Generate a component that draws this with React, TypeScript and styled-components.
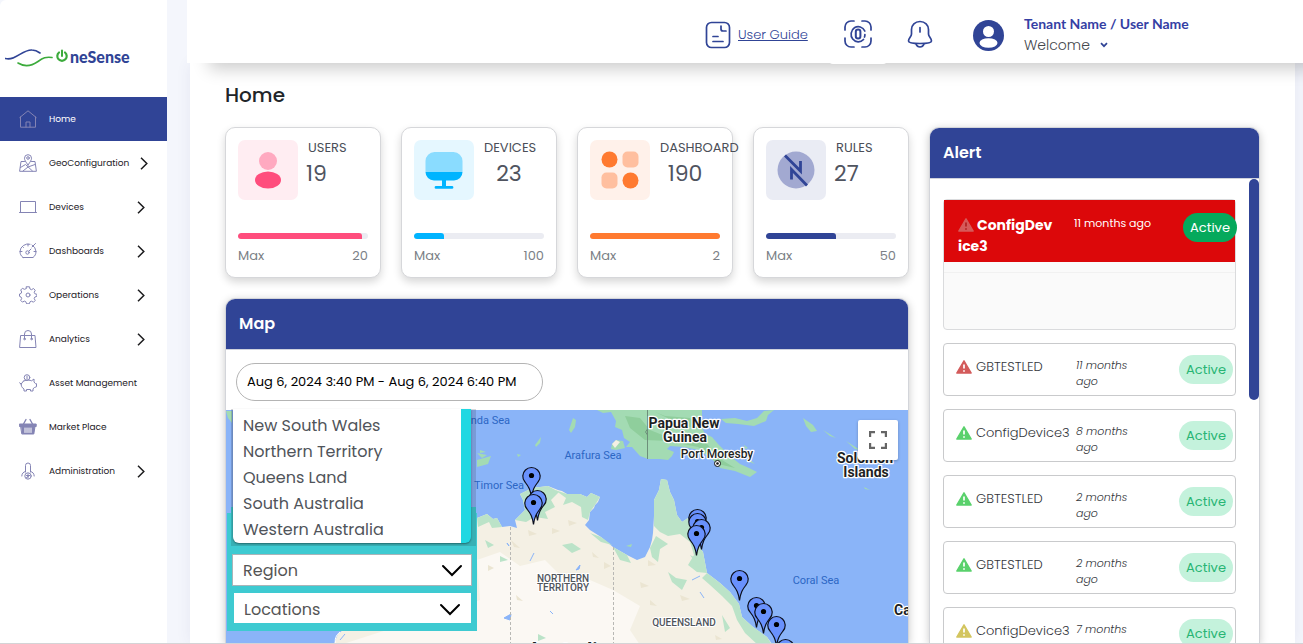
import React from "react";
import styled, { createGlobalStyle } from "styled-components";

const blue = "#304496";

const GlobalStyle = createGlobalStyle`
  *, *::before, *::after { box-sizing: border-box; }
  body {
    margin: 0;
    background: #f4f6fc;
    font-family: Poppins, Inter, "Liberation Sans", sans-serif;
    color: #4b4f58;
  }
  button, input { font-family: inherit; }
  button { border: 0; padding: 0; background: none; cursor: pointer; }
  h1, h2, p, ul { margin: 0; padding: 0; }
  ul { list-style: none; }
  svg { flex: none; }
`;

/* ---------- Shell ---------- */

const Shell = styled.div`
  display: flex;
  height: 100vh;
  overflow: hidden;
  border-bottom: 1px solid #d4d4d6;
  border-radius: 6px 0 0 0;
`;

const Sidebar = styled.aside`
  flex: 0 0 167px;
  min-width: 0;
  background: #fff;
`;

const LogoLink = styled.a`
  display: flex;
  align-items: center;
  gap: 1px;
  height: 97px;
  padding: 17px 0 0 5px;
  text-decoration: none;
`;

const LogoWord = styled.span`
  font: 900 16px/20px Lato, sans-serif;
  color: ${blue};
`;

const NavLink = styled.a<{ $active?: boolean }>`
  display: flex;
  align-items: center;
  height: 44px;
  padding: 0 18px 0 19px;
  font-size: 9px;
  line-height: 16px;
  text-decoration: none;
  color: ${(p) => (p.$active ? "#fff" : "#1d2026")};
  background: ${(p) => (p.$active ? blue : "transparent")};
`;

const NavText = styled.span`
  min-width: 88px;
  margin-left: 12px;
  padding-right: 11px;
  white-space: nowrap;
`;

const Column = styled.div`
  display: flex;
  flex: 1;
  flex-direction: column;
  min-width: 0;
  margin-left: 20px;
`;

const TopBar = styled.header`
  position: relative;
  z-index: 2;
  display: flex;
  flex: 0 0 63px;
  align-items: center;
  justify-content: flex-end;
  padding: 7px 117px 0 0;
  background: #fff;
  box-shadow: 22px 6px 16px rgba(0, 0, 0, 0.2);
`;

const GuideLink = styled.a`
  display: flex;
  align-items: center;
  gap: 7px;
  width: 104px;
  font-size: 13px;
  line-height: 20px;
  font-weight: 300;
  white-space: nowrap;
  color: ${blue};
`;

const ScanButton = styled.button`
  display: grid;
  place-items: center;
  align-self: stretch;
  width: 58px;
  margin: -4px 20px -1px;
  border-radius: 0 0 4px 4px;
  background: #fff;
`;

const IconButton = styled.button`
  display: grid;
  place-items: center;
  padding-bottom: 3px;
`;

const Profile = styled.div`
  display: flex;
  align-items: center;
  gap: 20px;
  margin-left: 40px;
`;

const Tenant = styled.p`
  width: 162px;
  font: 700 14px/20px Lato, sans-serif;
  white-space: nowrap;
  color: #3540a4;
`;

const Welcome = styled.button`
  display: flex;
  align-items: center;
  gap: 10px;
  font-size: 14px;
  font-weight: 300;
  line-height: 22px;
  color: #44474c;
`;

const Main = styled.main`
  display: flex;
  flex: 1;
  flex-direction: column;
  min-height: 0;
  margin: 0 8px 0 3px;
  padding: 17px 35px 0;
  background: #fff;
  box-shadow: 0 0 14px rgba(60, 70, 130, 0.08);
`;

const PageTitle = styled.h1`
  margin-bottom: 17px;
  font-size: 20px;
  font-weight: 500;
  line-height: 30px;
  color: #212529;
`;

const Board = styled.div`
  display: grid;
  flex: 1;
  grid-template-columns: minmax(0, 1fr) 331px;
  grid-template-rows: minmax(0, 1fr);
  gap: 20px;
  min-height: 0;
`;

const LeftSide = styled.div`
  display: flex;
  flex-direction: column;
  gap: 20px;
  min-width: 0;
`;

/* ---------- Stat cards ---------- */

const Stats = styled.section`
  display: grid;
  grid-template-columns: repeat(4, minmax(0, 1fr));
  gap: 20px;
`;

const StatCard = styled.article`
  height: 151px;
  padding: 12px;
  border: 1px solid #d6d7da;
  border-radius: 10px;
  background: #fff;
  box-shadow: 0 4px 8px rgba(0, 0, 0, 0.16);
`;

const StatTop = styled.div`
  display: flex;
  height: 93px;
`;

const Tile = styled.div<{ $tint: string }>`
  display: grid;
  flex: none;
  place-items: center;
  width: 60px;
  height: 60px;
  border-radius: 7px;
  background: ${(p) => p.$tint};
`;

const StatText = styled.div`
  flex: 1;
  min-width: 0;
`;

const StatLabel = styled.p`
  padding-left: 10px;
  font-size: 13px;
  line-height: 16px;
  white-space: nowrap;
`;

const StatValue = styled.p<{ $centered?: boolean }>`
  padding-left: ${(p) => (p.$centered ? 0 : 8)}px;
  font-size: 22px;
  line-height: 36px;
  text-align: ${(p) => (p.$centered ? "center" : "left")};
  color: #50545f;
`;

const Track = styled.div`
  height: 6px;
  overflow: hidden;
  border-radius: 3px;
  background: #ebecf2;
`;

const Fill = styled.div<{ $color: string }>`
  height: 100%;
  border-radius: 3px 3px 0 0;
  background: ${(p) => p.$color};
`;

const StatFoot = styled.div`
  display: flex;
  justify-content: space-between;
  padding-top: 7px;
  font-size: 13px;
  line-height: 20px;
  color: #7b7f86;
`;

/* ---------- Panels ---------- */

const Panel = styled.section`
  display: flex;
  flex: 1;
  flex-direction: column;
  min-height: 0;
  overflow: hidden;
  border: 1px solid #d3d5da;
  border-bottom: 0;
  border-radius: 10px 10px 0 0;
  background: #fff;
  box-shadow: 0 2px 8px rgba(0, 0, 0, 0.22);
`;

const PanelHead = styled.h2`
  flex: 0 0 51px;
  padding: 0 13px;
  border-bottom: 1px solid #cfd2dc;
  font-size: 16px;
  font-weight: 600;
  line-height: 50px;
  color: #fff;
  background: ${blue};
`;

const DateInput = styled.input`
  flex: none;
  width: 307px;
  height: 38px;
  margin: 13px 0 9px 10px;
  padding: 0 10px;
  border: 1px solid #b4b4b4;
  border-radius: 19px;
  font-size: 13px;
  color: #000;
`;

const MapArea = styled.div`
  position: relative;
  flex: 1;
  min-height: 0;
`;

const MapSvg = styled.svg`
  display: block;
  width: 100%;
  height: 100%;
`;

const FullscreenButton = styled.button`
  position: absolute;
  top: 10px;
  right: 10px;
  display: grid;
  place-items: center;
  width: 40px;
  height: 40px;
  border-radius: 2px;
  background: #fff;
  box-shadow: 0 1px 3px rgba(0, 0, 0, 0.25);
`;

const Filters = styled.div`
  position: absolute;
  top: 103px;
  left: 1px;
  display: flex;
  flex-direction: column;
  gap: 7px;
  width: 250px;
  padding: 41px 5px 8px;
  background: #3ecad1;
`;

const FilterButton = styled.button<{ $outlined?: boolean }>`
  display: flex;
  align-items: center;
  justify-content: space-between;
  height: ${(p) => (p.$outlined ? 32 : 30)}px;
  margin: ${(p) => (p.$outlined ? 0 : "0 1px 0 2px")};
  padding: ${(p) => (p.$outlined ? "0 8px 0 10px" : "3px 10px 0")};
  border: ${(p) => (p.$outlined ? "1px solid #aab4b8" : 0)};
  font-size: 16px;
  color: #555;
  background: #fff;
`;

const MenuFrame = styled.div`
  position: absolute;
  top: -1px;
  left: 5px;
  width: 245px;
  padding: 0 5px 3px 2px;
  background: linear-gradient(rgba(40, 40, 60, 0.18) 98px, #38b0b5 98px);
`;

const Menu = styled.ul`
  height: 134px;
  padding: 3px 10px;
  border-right: 10px solid #20d8e2;
  border-radius: 0 0 6px 6px;
  background: #fff;
  box-shadow: 0 1px 2px rgba(0, 0, 0, 0.4);
`;

const Option = styled.button`
  display: block;
  width: 100%;
  height: 26px;
  text-align: left;
  font-size: 16px;
  white-space: nowrap;
  color: #50545a;
`;

/* ---------- Alerts ---------- */

const AlertBody = styled.div`
  display: flex;
  flex: 1;
  align-items: flex-start;
  justify-content: space-between;
  min-height: 0;
  overflow: hidden;
  padding-left: 13px;
`;

const AlertList = styled.ul`
  display: flex;
  flex-direction: column;
  gap: 13px;
  width: 293px;
  padding-top: 20px;
`;

const Thumb = styled.div`
  width: 10px;
  height: 221px;
  border-radius: 5px;
  background: ${blue};
`;

const AlertItem = styled.li`
  display: flex;
  align-items: flex-start;
  height: 53px;
  padding: 11px 2px 0 12px;
  border: 1px solid #c9cacc;
  border-radius: 4px;
`;

const AlertName = styled.span`
  display: flex;
  align-items: center;
  gap: 4px;
  width: 120px;
  font-size: 13px;
  font-weight: 300;
  line-height: 23px;
  white-space: nowrap;
  color: #33363b;
`;

const AlertTime = styled.time`
  width: 60px;
  padding-top: 2px;
  font-size: 11px;
  font-style: italic;
  font-weight: 300;
  line-height: 16px;
  color: #33363b;
`;

const Badge = styled.span<{ $solid?: boolean }>`
  flex: none;
  width: 54px;
  height: 29px;
  margin-left: auto;
  border-radius: 15px;
  font-size: 13px;
  line-height: 29px;
  text-align: center;
  color: ${(p) => (p.$solid ? "#fff" : "#28b574")};
  background: ${(p) => (p.$solid ? "#05a95c" : "#c4f2dc")};
`;

const OpenAlert = styled.li`
  height: 131px;
  border: 1px solid #dadbdd;
  border-radius: 4px;
  background: #fafafa;
`;

const OpenHead = styled.div`
  display: flex;
  align-items: flex-start;
  height: 62px;
  padding: 13px 0 0 14px;
  margin-right: -2px;
  color: #fff;
  background: linear-gradient(#dc080a, #dc080a) no-repeat 0 0 / calc(100% - 2px) 100%;
`;

const OpenName = styled.span`
  width: 98px;
  padding-top: 2px;
  font-size: 14px;
  font-weight: 700;
  line-height: 21px;
  word-break: break-all;
  svg { margin: 0 3px -2px 0; }
`;

const OpenTime = styled.time`
  margin-left: 18px;
  font-size: 11px;
  line-height: 20px;
`;

const OpenRule = styled.div`
  height: 11px;
  border-bottom: 1px solid #f1f1f1;
`;

/* ---------- Icons ---------- */

const LineIcon = ({ children }: { children: React.ReactNode }) => (
  <svg width="18" height="18" viewBox="0 0 18 18" fill="none" stroke="#8484b4" strokeWidth="1" strokeLinejoin="round" strokeLinecap="round" aria-hidden>
    {children}
  </svg>
);

const Waves = () => (
  <svg width="64" height="20" viewBox="0 0 64 20" fill="none" strokeLinecap="round" aria-hidden>
    <path d="M0.5 11.500C11 14 17 2.500 27 3c4 0 6 1.500 8 3" stroke={blue} strokeWidth="1.600" />
    <path d="M13 16c8 5 15 2 20-1.500s8-5 14-4" stroke="#3cab3c" strokeWidth="1.600" />
    <path d="M54 5.500a4.700 4.700 0 1 0 6 0" stroke="#3cab3c" strokeWidth="2.200" />
    <path d="M57 3.500v5.500" stroke="#3cab3c" strokeWidth="2" />
  </svg>
);

const Chevron = () => (
  <svg width="8" height="13" viewBox="0 0 8 13" fill="none" stroke="#1d1d1f" strokeWidth="1.500" aria-hidden>
    <path d="M1 0.800 6.800 6.500 1 12.200" />
  </svg>
);

const SelectArrow = () => (
  <svg width="22" height="13" viewBox="0 0 22 13" fill="none" stroke="#000" strokeWidth="2" strokeLinecap="round" aria-hidden>
    <path d="M2 2l9 9 9-9" />
  </svg>
);

const Warning = ({ color, mark = "#fff" }: { color: string; mark?: string }) => (
  <svg width="16" height="14" viewBox="0 0 16 14" aria-hidden>
    <path d="M8 .8 15.200 13H.8z" fill={color} stroke={color} strokeWidth="1.400" strokeLinejoin="round" />
    <path d="M8 4.500v4M8 10.200v1.600" stroke={mark} strokeWidth="1.700" />
  </svg>
);

const navItems: { label: string; arrow?: boolean; active?: boolean; icon: React.ReactNode }[] = [
  { label: "Home", active: true, icon: <path d="M.8 7.500 9 .8l8.200 6.700M1.500 7v10.200h15V7M7 17v-5h4v5" /> },
  {
    label: "GeoConfiguration",
    arrow: true,
    icon: (
      <>
        <path d="M9 11C6.500 7.500 5.500 6 5.500 4.200a3.500 3.500 0 0 1 7 0C12.500 6 11.500 7.500 9 11z" />
        <circle cx="9" cy="4" r="1.300" />
        <path d="M5.500 7.500H2L.6 17.300h16.800L16 7.500h-3.500M1.500 13.500l5-3 7 6.500M4 17l5-4 7-2.500" />
      </>
    ),
  },
  { label: "Devices", arrow: true, icon: <path d="M1.500 14V3.500h15V14M.5 14.500h17" /> },
  {
    label: "Dashboards",
    arrow: true,
    icon: (
      <>
        <path d="M4 15.500h10c2-1.500 3-3.500 3-6A8 8 0 0 0 13 3M11 2.200a8 8 0 0 0-10 7.300c0 2.500 1 4.500 3 6M1 9.500h2M15 9.500h2M9 2v2M3.500 4.500l1 1M13 5l3.500-3.500" />
        <circle cx="8.500" cy="10.500" r="1.700" />
        <path d="m10 9 2-2" />
      </>
    ),
  },
  {
    label: "Operations",
    arrow: true,
    icon: (
      <>
        <path d="m7.500.8 3 0 .5 2.200 1.500.7 2-1.200 1.700 1.800-1 2 .7 1.500 2 .5v2l-2 .7-.7 1.500 1 2-1.700 1.700-2-1-1.500.6-.7 2H7.600l-.7-2-1.500-.7-2 1L1.700 14.400l1-2L2 11 .5 10.300V8L2 7.500 2.700 6l-1-2 1.700-1.700 2 1L7 2.700z" />
        <circle cx="9" cy="9" r="2" />
      </>
    ),
  },
  {
    label: "Analytics",
    arrow: true,
    icon: (
      <>
        <path d="M2 5.500h14l1 12H1zM5.500 8.500V4a3.500 3.500 0 0 1 7 0v4.500" />
        <circle cx="5.500" cy="9" r=".8" />
        <circle cx="12.500" cy="9" r=".8" />
      </>
    ),
  },
  {
    label: "Asset Management",
    icon: (
      <>
        <circle cx="8" cy="3.500" r="2.800" />
        <path d="M8 2.200v2.600M4.500 7C8 5.800 11 6 12.500 6.800L15 5v3l1.500 1.700h1v3l-2 .8-1.500 1.300v2.200h-2.500v-1.500H7.500v1.500H5v-2c-2.500-1.500-3-3.500-2.800-5M2.200 10 .6 8.800M4.500 7 2.200 10" />
      </>
    ),
  },
  {
    label: "Market Place",
    icon: (
      <>
        <path d="M4.500 6 7 1.500M13.500 6 11 1.500" strokeWidth="1.400" />
        <path d="M.8 6h16.400v2.500H.8zM2 8.500h14L14.800 16H3.200z" fill="#8484b4" />
        <path d="M6 10v4.500M8 10v4.500M10 10v4.500M12 10v4.500" stroke="#fff" />
      </>
    ),
  },
  {
    label: "Administration",
    arrow: true,
    icon: (
      <>
        <path d="M6.500 10V3.500a2.500 2.500 0 0 1 5 0V10M6.500 9.500c-2.500.5-3.500 2-3.700 4.500M11.500 9.500c2.500.5 3.500 2 3.700 4.500" />
        <circle cx="9" cy="14" r="3.200" />
        <path d="M7.500 13.500h3M9 12v4M7.500 15.500l3-2" />
      </>
    ),
  },
];

const GuideIcon = () => (
  <svg width="26" height="28" viewBox="0 0 26 28" fill="none" stroke={blue} strokeWidth="1.700" strokeLinecap="round" aria-hidden>
    <rect x="1.500" y="1.500" width="23" height="25" rx="5" />
    <path d="M16 5v3a2 2 0 0 0 2 2h3M8 15.500h5M8 20.500h10" />
  </svg>
);

const ScanIcon = () => (
  <svg width="28" height="28" viewBox="0 0 28 28" fill="none" stroke={blue} strokeWidth="1.700" strokeLinecap="round" aria-hidden>
    <path d="M1 10V7a6 6 0 0 1 6-6h3M18 1h3a6 6 0 0 1 6 6v3M27 18v3a6 6 0 0 1-6 6h-3M10 27H7a6 6 0 0 1-6-6v-3" />
    <path d="M20.800 11A7.200 7.600 0 1 0 19.500 19.500M20.900 14.500a7 7 0 0 1-.4 2.500" />
    <rect x="11.800" y="9.500" width="4.600" height="9" rx="2.300" strokeWidth="2" />
  </svg>
);

const BellIcon = () => (
  <svg width="26" height="28" viewBox="0 0 26 28" fill="none" stroke={blue} strokeWidth="1.700" strokeLinecap="round" strokeLinejoin="round" aria-hidden>
    <path d="M13 1.500c-5 0-8.500 3.500-8.500 8v4.500c0 2.500-3 4-3 7 0 1.500 4.500 2.500 11.500 2.500s11.500-1 11.500-2.500c0-3-3-4.500-3-7V9.500c0-4.500-3.500-8-8.500-8z" />
    <path d="M9 24c.8 2.200 2.200 3 4 3s3.200-.8 4-3M13 7.500v4.500" />
  </svg>
);

const Avatar = () => (
  <svg width="31" height="31" viewBox="0 0 31 31" aria-hidden>
    <circle cx="15.500" cy="15.500" r="15.500" fill={blue} />
    <circle cx="15.500" cy="11.500" r="5.500" fill="#fff" />
    <ellipse cx="15.500" cy="23" rx="9" ry="4.800" fill="#fff" />
  </svg>
);

const UsersArt = () => (
  <svg width="38" height="38" viewBox="0 0 38 38" aria-hidden>
    <circle cx="19" cy="10" r="9" fill="#ffa9c0" />
    <ellipse cx="19" cy="29" rx="13" ry="8.600" fill="#ff4d7d" />
  </svg>
);

const DevicesArt = () => (
  <svg width="38" height="38" viewBox="0 0 38 38" aria-hidden>
    <path d="M.5 10A9 9 0 0 1 9.500 1h19a9 9 0 0 1 9 9v11H.5z" fill="#8adcff" />
    <path d="M.5 21h37a8.500 8.500 0 0 1-8.500 8.500h-8V35h6a1.400 1.400 0 0 1 0 2.800H11A1.400 1.400 0 0 1 11 35h6v-5.500H9A8.500 8.500 0 0 1 .5 21z" fill="#00b4ff" />
  </svg>
);

const DashboardArt = () => (
  <svg width="38" height="38" viewBox="0 0 38 38" aria-hidden>
    <circle cx="8.500" cy="8.500" r="8" fill="#ff7a30" />
    <rect x="21.500" y=".5" width="16" height="16" rx="5" fill="#ffbf9f" />
    <rect x=".5" y="21.500" width="16" height="16" rx="5" fill="#ffbf9f" />
    <circle cx="29.500" cy="29.500" r="8" fill="#ff7a30" />
  </svg>
);

const RulesArt = () => (
  <svg width="38" height="38" viewBox="0 0 38 38" fill="none" aria-hidden>
    <circle cx="19" cy="19" r="18.500" fill="#a2a9d1" />
    <path d="M8 4.500 23.500 20V10M30 34.500 14.500 18.500v10" stroke={blue} strokeWidth="2.800" />
  </svg>
);

/* ---------- Map ---------- */

const pins: [number, number][] = [
  [531, 476], [537, 499], [533, 503], [697, 518], [697, 522], [701, 528],
  [696, 534], [739, 579], [756, 606], [763, 612], [776, 625], [785, 648],
];

const coast =
  "M333 646 338 634 380 600 430 540 477 518 482 516 487 514 493 519 497 518 502 527 510 526 517 528 515 520 525 510 523 500 520 494 526 491 532 488 548 486 558 490 562 491 567 494 580 494 587 497 591 493 600 497 598 502 595 505 594 508 590 512 589 520 585 525 590 530 601 537 613 547 627 555 637 560 645 557 650 547 652 540 653 533 654 516 654 500 659 490 661 479 667 480 670 492 674 500 677 515 682 522 688 518 690 532 694 540 703 552 707 573 720 583 730 592 739 604 742 617 753 627 767 637 775 648z";

const MapDrawing = () => (
  <MapSvg viewBox="226 410 682 233" preserveAspectRatio="xMidYMin slice" role="img" aria-label="Map of northern Australia">
    <rect x="0" y="300" width="1400" height="500" fill="#8ab4f8" />
    <g fill="#a3dbb3">
      <path d="M597 410 603 413 611 412 616 421 615 427 622 430 624 438 630 442 626 447 632 447 640 456 648 459 660 459 668 460 672 456 674 452 667 449 670 446 684 447 699 450 712 459 720 468 735 471 750 477 757 472 749 468 740 464 730 456 722 448 718 444 712 437 705 434 702 428 702 410z" />
      <path d="M612 444 616 440 623 441 625 448 616 450 611 449z" />
      <path d="M721 419 735 418 747 421 757 418 764 411 774 410 768 415 766 421 754 426 738 424 726 423z" />
      <path d="M803 418 813 425 817 431 811 432 806 426zM823 430 836 438 830 436zM846 441 860 450 855 449zM860 452 872 460 866 460zM864 487 870 490 865 489zM786 486 792 487zM779 459 783 460zM569 430 573 418 576 420 575 427 571 433zM744 445 748 448 745 449zM750 460 755 464 750 462z" />
      <path d="M226 411h6v12l-4-5zM477 453 487 455 482 458zM477 460 491 456 488 464 477 467zM517 454 521 455 518 457zM535 445 541 437 540 443 536 447zM480 450 486 452 480 453zM626 546 632 544 631 547z" />
    </g>
    <path d="M625 416 640 418 650 430 665 436 690 440 705 442 722 460 735 468 718 464 698 447 668 441 645 440 630 428zM655 412 665 416 690 418 700 430 680 424z" fill="#8fce9c" />
    <path d="M612 444 616 440 620 442 615 448z" fill="#f4f0e4" />
    <path d="M647.500 410v49M647.500 429l-2 3 2 3" stroke="#6d8f7a" fill="none" />
    <path d={coast} fill="#f4f0e4" />
    <path d="M477 560 500 552 520 566 545 560 560 575 590 580 613 590 640 606 630 630 640 645 340 645 480 600z" fill="#fbf8f3" />
    <g fill="#bbe3c8">
      <path d="M515 520 525 510 523 500 520 494 532 488 548 486 559 492 551 500 555 507 545 512 548 519 535 517 526 522z" />
      <path d="M555 490 567 494 580 494 587 497 591 493 600 497 595 505 590 512 588 520 582 517 581 507 572 502 563 505 566 498z" />
      <path d="M477 518 487 514 493 519 497 518 502 527 492 528 489 522 478 527z" />
      <path d="M661 479 667 480 670 492 674 500 677 515 682 522 688 518 692 537 703 552 707 573 697 572 688 565 694 555 690 542 680 534 668 536 660 532 654 526 654 500 659 490z" />
      <path d="M650 548 656 536 668 544 660 549 658 562 652 557zM613 547 627 555 631 563 620 560zM668 572 676 578 687 580 682 590 672 582zM562 545 572 543 581 549 572 553zM590 533 601 537 612 545 601 542z" />
      <path d="M707 573 720 583 730 592 739 604 742 617 753 627 767 637 772 645 758 645 745 633 737 620 732 606 722 596 710 585 702 578zM722 615 730 628 725 632zM700 600 706 606zM485 540 494 545 488 548zM500 556 508 560 500 562zM538 634 546 638 538 641zM690 555 700 560 699 568z" />
    </g>
    <g fill="#ebe5d2">
      <path d="M511 540 520 548 514 547zM528 530 537 534 529 536zM552 528 560 531 552 534zM568 520 577 523 569 526zM592 552 599 558 593 557zM604 562 611 566 604 569zM500 580 506 584zM516 595 523 601 517 600zM648 560 656 565 648 566zM660 575 668 579zM640 582 649 586 641 588zM680 595 690 599 682 601zM650 600 657 606 650 605zM697 612 703 617zM715 635 722 639 716 640zM488 565 494 568 488 571z" />
    </g>
    <g fill="#8ab4f8" stroke="#8ab4f8">
      <path d="M504 618 511 614 510 620zM576 570 580 565 579 569zM507 543 509 546z" />
      <path d="M530 561 534 553M692 580 700 576M700 592 704 598M550 611 553 614M340 640 345 634" fill="none" />
    </g>
    <path d="M510.500 527V644M613.500 547V644" stroke="#b8b8b4" strokeDasharray="3 2" fill="none" />
    <path d="M340 632c-4 3-6 8-4 12" stroke="#fff" fill="none" />
    <g fontFamily="Roboto, sans-serif" textAnchor="middle">
      <g fontSize="11" fill="#2c66c4">
        <text x="593" y="459">Arafura Sea</text>
        <text x="499" y="489">Timor Sea</text>
        <text x="816" y="584">Coral Sea</text>
        <text x="510" y="424" textAnchor="end">Banda Sea</text>
      </g>
      <g fontSize="14" fontWeight="700" fill="#1d1f24" stroke="#fff" strokeWidth="2.500" paintOrder="stroke" strokeLinejoin="round">
        <text x="684" y="428">Papua New</text>
        <text x="685" y="442">Guinea</text>
        <text x="865" y="463">Solomon</text>
        <text x="866" y="477">Islands</text>
        <text x="894" y="615" textAnchor="start">Caledonia</text>
        <text x="568" y="657" fontSize="20">Australia</text>
        <text x="717" y="458" fontSize="12" fontWeight="500">Port Moresby</text>
      </g>
      <g fontSize="10" fontWeight="500" fill="#4f555c" stroke="#fff" strokeWidth="2" paintOrder="stroke">
        <text x="563" y="582">NORTHERN</text>
        <text x="563" y="591">TERRITORY</text>
        <text x="684" y="626">QUEENSLAND</text>
      </g>
    </g>
    <circle cx="717.500" cy="463.500" r="3" fill="#fff" stroke="#111" />
    <circle cx="717.500" cy="463.500" r="1.300" fill="#111" />
    {pins.map(([x, y]) => (
      <g key={`${x}-${y}`} transform={`translate(${x + 0.5} ${y - 0.5})`}>
        <path d="M0 22C-1 14-3 11-6.500 6.500A8.700 8.700 0 1 1 6.500 6.500C3 11 1 14 0 22z" fill="#6991fd" stroke="#0c0f1c" strokeWidth="1.200" />
        <circle r="2.600" fill="#000" />
      </g>
    ))}
  </MapSvg>
);

/* ---------- Data ---------- */

const stats = [
  { label: "USERS", value: 19, max: 20, fill: 95, color: "#ff4d7d", tint: "#ffedf2", art: <UsersArt /> },
  { label: "DEVICES", value: 23, max: 100, fill: 23, color: "#00b4ff", tint: "#e5f7ff", art: <DevicesArt />, centered: true },
  { label: "DASHBOARD", value: 190, max: 2, fill: 100, color: "#ff7a30", tint: "#fff1ea", art: <DashboardArt />, centered: true },
  { label: "RULES", value: 27, max: 50, fill: 54, color: blue, tint: "#eaecf4", art: <RulesArt /> },
];

const states = ["New South Wales", "Northern Territory", "Queens Land", "South Australia", "Western Australia"];

const alerts = [
  { name: "GBTESTLED", time: "11 months ago", color: "#d35b5b" },
  { name: "ConfigDevice3", time: "8 months ago", color: "#5ad16c" },
  { name: "GBTESTLED", time: "2 months ago", color: "#5ad16c" },
  { name: "GBTESTLED", time: "2 months ago", color: "#5ad16c" },
  { name: "ConfigDevice3", time: "7 months ago", color: "#d3c55f" },
];

export default function App() {
  return (
    <>
      <GlobalStyle />
      <Shell>
        <Sidebar>
          <LogoLink href="#home" aria-label="OneSense">
            <Waves />
            <LogoWord>neSense</LogoWord>
          </LogoLink>
          <nav>
            {navItems.map((item) => (
              <NavLink key={item.label} href="#" $active={item.active}>
                <LineIcon>{item.icon}</LineIcon>
                <NavText>{item.label}</NavText>
                {item.arrow && <Chevron />}
              </NavLink>
            ))}
          </nav>
        </Sidebar>

        <Column>
          <TopBar>
            <GuideLink href="#guide">
              <GuideIcon />
              User Guide
            </GuideLink>
            <ScanButton aria-label="Scan">
              <ScanIcon />
            </ScanButton>
            <IconButton aria-label="Notifications">
              <BellIcon />
            </IconButton>
            <Profile>
              <Avatar />
              <div>
                <Tenant>Tenant Name / User Name</Tenant>
                <Welcome>
                  Welcome
                  <svg width="8" height="6" viewBox="0 0 8 6" fill="none" stroke={blue} strokeWidth="1.700" aria-hidden>
                    <path d="M1 1.200 4 4.200l3-3" />
                  </svg>
                </Welcome>
              </div>
            </Profile>
          </TopBar>

          <Main>
            <PageTitle>Home</PageTitle>
            <Board>
              <LeftSide>
                <Stats>
                  {stats.map((s) => (
                    <StatCard key={s.label}>
                      <StatTop>
                        <Tile $tint={s.tint}>{s.art}</Tile>
                        <StatText>
                          <StatLabel>{s.label}</StatLabel>
                          <StatValue $centered={s.centered}>{s.value}</StatValue>
                        </StatText>
                      </StatTop>
                      <Track>
                        <Fill $color={s.color} style={{ width: `${s.fill}%` }} />
                      </Track>
                      <StatFoot>
                        <span>Max</span>
                        <span>{s.max}</span>
                      </StatFoot>
                    </StatCard>
                  ))}
                </Stats>

                <Panel>
                  <PanelHead>Map</PanelHead>
                  <DateInput aria-label="Date range" defaultValue="Aug 6, 2024 3:40 PM - Aug 6, 2024 6:40 PM" />
                  <MapArea>
                    <MapDrawing />
                    <FullscreenButton aria-label="Toggle fullscreen">
                      <svg width="18" height="18" viewBox="0 0 18 18" fill="none" stroke="#666" strokeWidth="2.200" aria-hidden>
                        <path d="M1.100 6V1.100H6M12 1.100h4.900V6M16.900 12v4.900H12M6 16.900H1.100V12" />
                      </svg>
                    </FullscreenButton>
                    <Filters>
                      <FilterButton $outlined>
                        Region <SelectArrow />
                      </FilterButton>
                      <FilterButton>
                        Locations <SelectArrow />
                      </FilterButton>
                    </Filters>
                    <MenuFrame>
                      <Menu>
                        {states.map((s) => (
                          <li key={s}>
                            <Option>{s}</Option>
                          </li>
                        ))}
                      </Menu>
                    </MenuFrame>
                  </MapArea>
                </Panel>
              </LeftSide>

              <Panel>
                <PanelHead>Alert</PanelHead>
                <AlertBody>
                  <AlertList>
                    <OpenAlert>
                      <OpenHead>
                        <OpenName>
                          <Warning color="#d65a5a" mark="#b02020" />
                          ConfigDevice3
                        </OpenName>
                        <OpenTime>11 months ago</OpenTime>
                        <Badge $solid>Active</Badge>
                      </OpenHead>
                      <OpenRule />
                    </OpenAlert>
                    {alerts.map((a, i) => (
                      <AlertItem key={i}>
                        <AlertName>
                          <Warning color={a.color} />
                          {a.name}
                        </AlertName>
                        <AlertTime>{a.time}</AlertTime>
                        <Badge>Active</Badge>
                      </AlertItem>
                    ))}
                  </AlertList>
                  <Thumb />
                </AlertBody>
              </Panel>
            </Board>
          </Main>
        </Column>
      </Shell>
    </>
  );
}
